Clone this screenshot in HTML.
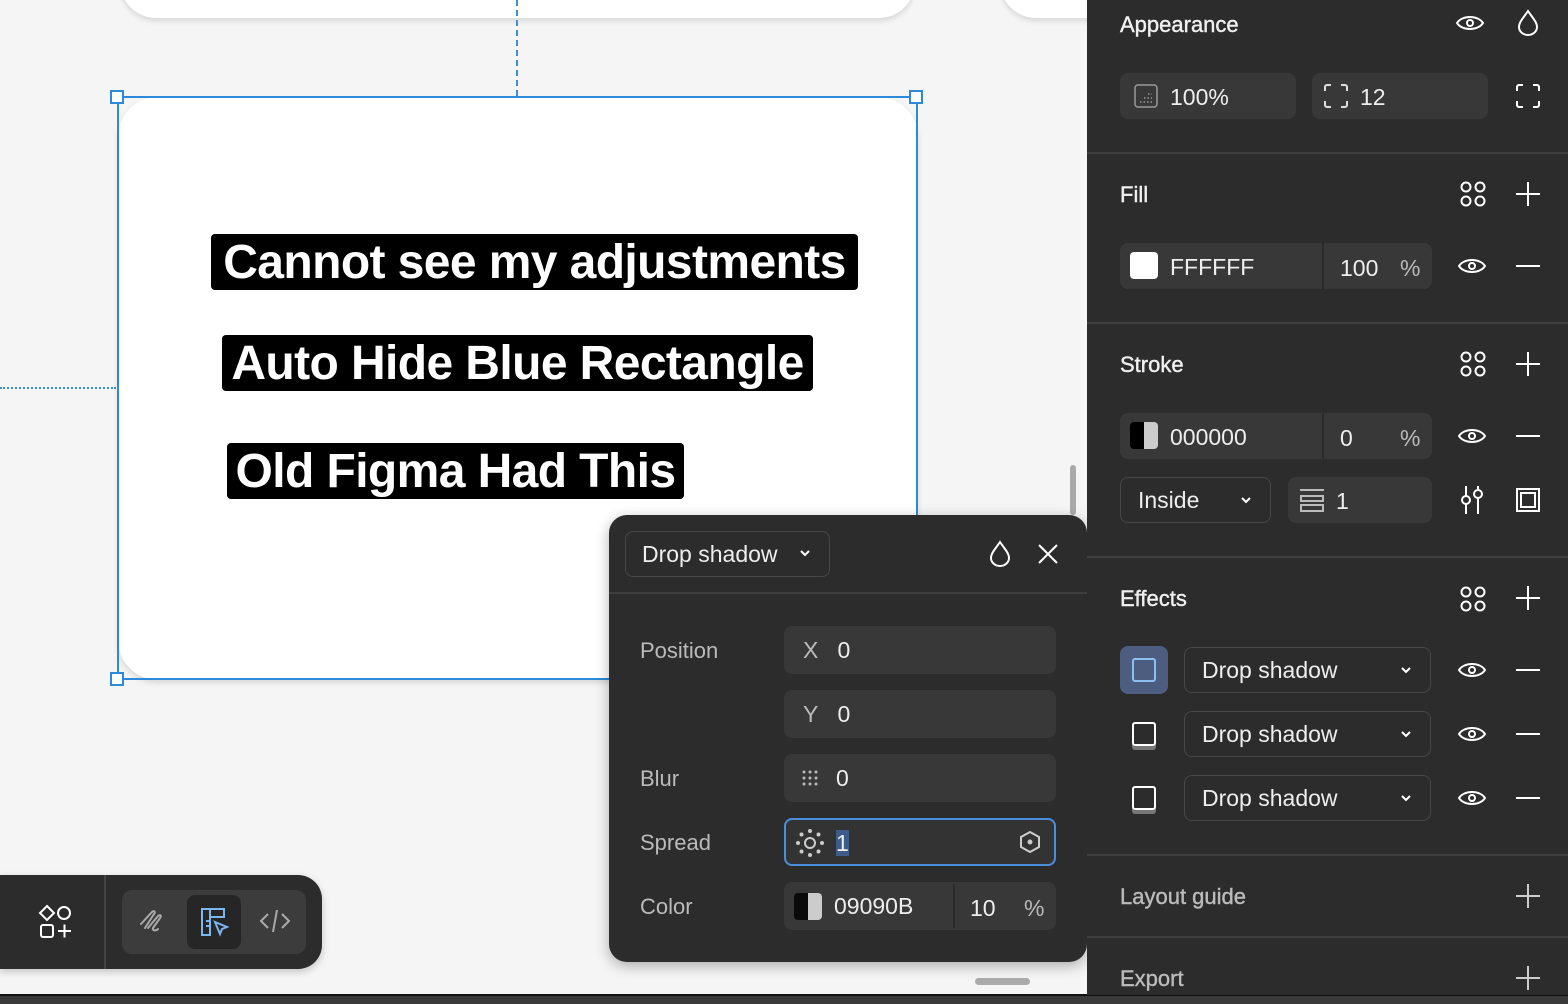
<!DOCTYPE html>
<html><head><meta charset="utf-8"><style>
*{box-sizing:border-box;margin:0;padding:0}
body{width:1568px;height:1004px;overflow:hidden;background:#f5f5f5;font-family:"Liberation Sans",sans-serif;position:relative;color:#fff}
.a{position:absolute}
.card{background:#fff;box-shadow:0 3px 6px rgba(0,0,0,.12)}
.lbl{position:absolute;background:#000;color:#fff;font-weight:bold;font-size:48px;line-height:58px;height:56px;border-radius:4px;white-space:nowrap;overflow:hidden;text-align:center;letter-spacing:-0.6px}
.h{position:absolute;left:1120px;font-size:22px;color:#f0f0f0;-webkit-text-stroke:0.4px #f0f0f0}
.f{position:absolute;background:#383838;border-radius:8px;height:46px;font-size:23px;line-height:48px;color:#eee}
.dd{position:absolute;border:1.5px solid #484848;border-radius:8px;height:46px;font-size:23px;line-height:45px;color:#eee}
.div{position:absolute;left:1087px;width:481px;height:2px;background:#3e3e3e}
svg{position:absolute;overflow:visible}
.pl{position:absolute;font-size:22px;color:#bbb}
.n{position:absolute;font-size:23px;color:#eee}
</style></head><body>
<!-- canvas -->
<div class="a card" style="left:120px;top:-60px;width:795px;height:78px;border-radius:0 0 36px 36px"></div>
<div class="a card" style="left:1000px;top:-60px;width:120px;height:78px;border-radius:0 0 0 36px"></div>
<div class="a" style="left:516px;top:0;height:96px;border-left:2px dashed #3b8fd9"></div>
<div class="a" style="left:0;top:387px;width:116px;border-top:2px dotted #3b8fd9"></div>
<div class="a card" style="left:118px;top:97px;width:800px;height:583px;border-radius:40px 40px 0 40px"></div>
<div class="a" style="left:117px;top:96px;width:801px;height:584px;border:2px solid #2d8ad8"></div>
<div class="a" style="left:110px;top:90px;width:14px;height:14px;border:2px solid #2d8ad8;background:#fff"></div>
<div class="a" style="left:909px;top:90px;width:14px;height:14px;border:2px solid #2d8ad8;background:#fff"></div>
<div class="a" style="left:110px;top:672px;width:14px;height:14px;border:2px solid #2d8ad8;background:#fff"></div>
<div class="lbl" style="left:211px;top:234px;width:647px">Cannot see my adjustments</div>
<div class="lbl" style="left:222px;top:335px;width:591px">Auto Hide Blue Rectangle</div>
<div class="lbl" style="left:227px;top:443px;width:457px">Old Figma Had This</div>
<div class="a" style="left:1070px;top:465px;width:6px;height:50px;background:#aaa;border-radius:3px"></div>
<div class="a" style="left:975px;top:978px;width:55px;height:7px;background:#aaa;border-radius:4px"></div>
<div class="a" style="left:0;top:994px;width:1568px;height:10px;background:#3a3a3a;border-top:2px solid #111"></div>

<!-- toolbar -->
<div class="a" style="left:0;top:875px;width:322px;height:94px;background:#2c2c2c;border-radius:0 24px 24px 0;box-shadow:0 3px 8px rgba(0,0,0,.2)"></div>
<div class="a" style="left:104px;top:875px;width:2px;height:94px;background:#444"></div>
<svg style="left:38px;top:905px" width="36" height="34" fill="none" stroke="#fff" stroke-width="2"><path d="M9 1l7 7-7 7-7-7z"/><circle cx="26" cy="8" r="6"/><rect x="3" y="20" width="12" height="12" rx="2"/><path d="M20 26h13M26.5 19.5v13"/></svg>
<div class="a" style="left:122px;top:890px;width:184px;height:64px;background:#3c3c3c;border-radius:10px"></div>
<div class="a" style="left:187px;top:895px;width:54px;height:54px;background:#262626;border-radius:8px"></div>
<svg style="left:140px;top:908px" width="28" height="26" fill="none" stroke="#aaa" stroke-width="2" stroke-linecap="round"><path d="M1 16L12 4c2-2 4 0 2 2L5 20M8 20L18 8c2-2 4 0 2 2L13 20c-1 3 3 3 5 1"/></svg>
<svg style="left:201px;top:908px" width="28" height="28" fill="none" stroke="#7cb7ee" stroke-width="2"><path d="M1 1h22v8H9v18H1z"/><path d="M9 9V1M5 13h4M5 18h4"/><path d="M14 14l12 5-5 2-2 5z"/></svg>
<svg style="left:260px;top:908px" width="30" height="26" fill="none" stroke="#aaa" stroke-width="2"><path d="M8 6L1 13l7 7M22 6l7 7-7 7M17 2l-4 22"/></svg>

<!-- popup -->
<div class="a" style="left:609px;top:515px;width:478px;height:447px;background:#2c2c2c;border-radius:18px;box-shadow:0 4px 14px rgba(0,0,0,.3)"></div>
<div class="dd" style="left:625px;top:531px;width:205px;padding-left:16px">Drop shadow</div>
<svg style="left:800px;top:550px" width="10" height="6" fill="none" stroke="#fff" stroke-width="2"><path d="M1 1l4 4 4-4"/></svg>
<svg style="left:990px;top:541px" width="20" height="26" fill="none" stroke="#fff" stroke-width="2"><path d="M10 1C6 7 1 12 1 17a9 8 0 0018 0C19 12 14 7 10 1z"/></svg>
<svg style="left:1038px;top:544px" width="20" height="20" stroke="#fff" stroke-width="2"><path d="M1 1l18 18M19 1L1 19"/></svg>
<div class="a" style="left:609px;top:592px;width:478px;height:2px;background:#3e3e3e"></div>
<div class="pl" style="left:640px;top:638px">Position</div>
<div class="pl" style="left:640px;top:766px">Blur</div>
<div class="pl" style="left:640px;top:830px">Spread</div>
<div class="pl" style="left:640px;top:894px">Color</div>
<div class="f" style="left:784px;top:626px;width:272px;height:48px;padding-left:19px"><span style="color:#bbb">X</span>&nbsp;&nbsp;&nbsp;0</div>
<div class="f" style="left:784px;top:690px;width:272px;height:48px;padding-left:19px"><span style="color:#bbb">Y</span>&nbsp;&nbsp;&nbsp;0</div>
<div class="f" style="left:784px;top:754px;width:272px;height:48px;padding-left:52px">0</div>
<svg style="left:802px;top:770px" width="16" height="16" fill="#bbb"><circle cx="2" cy="2" r="1.5"/><circle cx="8" cy="2" r="1.5"/><circle cx="14" cy="2" r="1.5"/><circle cx="2" cy="8" r="1.5"/><circle cx="8" cy="8" r="1.5"/><circle cx="14" cy="8" r="1.5"/><circle cx="2" cy="14" r="1.5"/><circle cx="8" cy="14" r="1.5"/><circle cx="14" cy="14" r="1.5"/></svg>
<div class="f" style="left:784px;top:818px;width:272px;height:48px;border:2px solid #4a8fdc;background:#333;padding-left:50px;line-height:46px"><span style="background:#3e5c8a">1</span></div>
<svg style="left:796px;top:829px" width="28" height="28" fill="#ccc" stroke="#ccc"><circle cx="14" cy="14" r="5" fill="none" stroke-width="2"/><circle cx="14" cy="2" r="1.5"/><circle cx="14" cy="26" r="1.5"/><circle cx="2" cy="14" r="1.5"/><circle cx="26" cy="14" r="1.5"/><circle cx="5.5" cy="5.5" r="1.5"/><circle cx="22.5" cy="22.5" r="1.5"/><circle cx="5.5" cy="22.5" r="1.5"/><circle cx="22.5" cy="5.5" r="1.5"/></svg>
<svg style="left:1019px;top:831px" width="22" height="22" fill="none" stroke="#ccc" stroke-width="2"><path d="M11 1l9 5v10l-9 5-9-5V6z"/><circle cx="11" cy="11" r="1.5" fill="#ccc"/></svg>
<div class="f" style="left:784px;top:882px;width:272px;height:48px;padding-left:50px">09090B</div>
<div class="a" style="left:953px;top:884px;width:2px;height:44px;background:#2a2a2a"></div>
<div class="n" style="left:970px;top:895px">10</div>
<div class="n" style="left:1024px;top:895px;color:#bbb">%</div>
<div class="a" style="left:794px;top:893px;width:28px;height:27px;border-radius:4px;background:linear-gradient(90deg,#0a0a0a 50%,#ccc 50%)"></div>

<!-- right panel -->
<div class="a" style="left:1087px;top:0;width:481px;height:995px;background:#2c2c2c"></div>
<div class="h" style="top:12px">Appearance</div>
<svg style="left:1456px;top:13px" width="28" height="20" fill="none" stroke="#fff" stroke-width="2"><path d="M1 10C6 2 22 2 27 10 22 18 6 18 1 10z"/><circle cx="14" cy="10" r="3"/></svg>
<svg style="left:1518px;top:10px" width="20" height="26" fill="none" stroke="#fff" stroke-width="2"><path d="M10 1C6 7 1 12 1 17a9 8 0 0018 0C19 12 14 7 10 1z"/></svg>
<div class="f" style="left:1120px;top:73px;width:176px;padding-left:50px">100%</div>
<svg style="left:1134px;top:84px" width="24" height="24" fill="none" stroke="#999" stroke-width="1.5"><rect x="1" y="1" width="22" height="22" rx="3"/><path d="M6 18h12M10 14h8M14 10h4" stroke-dasharray="1.5 2"/></svg>
<div class="f" style="left:1312px;top:73px;width:176px;padding-left:48px">12</div>
<svg style="left:1324px;top:84px" width="24" height="24" fill="none" stroke="#ddd" stroke-width="2"><path d="M1 7V3a2 2 0 012-2h4M17 1h4a2 2 0 012 2v4M23 17v4a2 2 0 01-2 2h-4M7 23H3a2 2 0 01-2-2v-4"/></svg>
<svg style="left:1516px;top:84px" width="24" height="24" fill="none" stroke="#fff" stroke-width="2"><path d="M1 7V3a2 2 0 012-2h4M17 1h4a2 2 0 012 2v4M23 17v4a2 2 0 01-2 2h-4M7 23H3a2 2 0 01-2-2v-4"/></svg>
<div class="div" style="top:152px"></div>

<div class="h" style="top:182px">Fill</div>
<svg style="left:1460px;top:181px" width="26" height="26" fill="none" stroke="#fff" stroke-width="2"><circle cx="6" cy="6" r="4.5"/><circle cx="20" cy="6" r="4.5"/><circle cx="6" cy="20" r="4.5"/><circle cx="20" cy="20" r="4.5"/></svg>
<svg style="left:1516px;top:182px" width="24" height="24" stroke="#fff" stroke-width="2"><path d="M12 0v24M0 12h24"/></svg>
<div class="f" style="left:1120px;top:243px;width:312px;padding-left:50px">FFFFFF</div>
<div class="a" style="left:1130px;top:252px;width:28px;height:27px;background:#fff;border-radius:4px"></div>
<div class="a" style="left:1322px;top:243px;width:2px;height:46px;background:#2a2a2a"></div>
<div class="n" style="left:1340px;top:255px">100</div>
<div class="n" style="left:1400px;top:255px;color:#bbb">%</div>
<svg style="left:1458px;top:256px" width="28" height="20" fill="none" stroke="#fff" stroke-width="2"><path d="M1 10C6 2 22 2 27 10 22 18 6 18 1 10z"/><circle cx="14" cy="10" r="3"/></svg>
<div class="a" style="left:1516px;top:265px;width:24px;height:2px;background:#fff"></div>
<div class="div" style="top:322px"></div>

<div class="h" style="top:352px">Stroke</div>
<svg style="left:1460px;top:351px" width="26" height="26" fill="none" stroke="#fff" stroke-width="2"><circle cx="6" cy="6" r="4.5"/><circle cx="20" cy="6" r="4.5"/><circle cx="6" cy="20" r="4.5"/><circle cx="20" cy="20" r="4.5"/></svg>
<svg style="left:1516px;top:352px" width="24" height="24" stroke="#fff" stroke-width="2"><path d="M12 0v24M0 12h24"/></svg>
<div class="f" style="left:1120px;top:413px;width:312px;padding-left:50px">000000</div>
<div class="a" style="left:1130px;top:422px;width:28px;height:27px;background:linear-gradient(90deg,#000 50%,#ccc 50%);border-radius:4px"></div>
<div class="a" style="left:1322px;top:413px;width:2px;height:46px;background:#2a2a2a"></div>
<div class="n" style="left:1340px;top:425px">0</div>
<div class="n" style="left:1400px;top:425px;color:#bbb">%</div>
<svg style="left:1458px;top:426px" width="28" height="20" fill="none" stroke="#fff" stroke-width="2"><path d="M1 10C6 2 22 2 27 10 22 18 6 18 1 10z"/><circle cx="14" cy="10" r="3"/></svg>
<div class="a" style="left:1516px;top:435px;width:24px;height:2px;background:#fff"></div>
<div class="dd" style="left:1120px;top:477px;width:151px;padding-left:17px">Inside</div>
<svg style="left:1241px;top:497px" width="10" height="6" fill="none" stroke="#fff" stroke-width="2"><path d="M1 1l4 4 4-4"/></svg>
<div class="f" style="left:1288px;top:477px;width:144px;padding-left:48px">1</div>
<svg style="left:1300px;top:488px" width="24" height="24" fill="none" stroke="#bbb" stroke-width="2"><path d="M0 2h24"/><rect x="1" y="8" width="22" height="5"/><rect x="1" y="17" width="22" height="6"/></svg>
<svg style="left:1460px;top:486px" width="24" height="28" fill="none" stroke="#fff" stroke-width="2"><path d="M6 0v10M6 18v10M18 0v4M18 12v16"/><circle cx="6" cy="14" r="4"/><circle cx="18" cy="8" r="4"/></svg>
<svg style="left:1516px;top:488px" width="24" height="24" fill="none" stroke="#fff" stroke-width="2"><rect x="1" y="1" width="22" height="22"/><rect x="5" y="5" width="14" height="14"/></svg>
<div class="div" style="top:556px"></div>

<div class="h" style="top:586px">Effects</div>
<svg style="left:1460px;top:586px" width="26" height="26" fill="none" stroke="#fff" stroke-width="2"><circle cx="6" cy="6" r="4.5"/><circle cx="20" cy="6" r="4.5"/><circle cx="6" cy="20" r="4.5"/><circle cx="20" cy="20" r="4.5"/></svg>
<svg style="left:1516px;top:586px" width="24" height="24" stroke="#fff" stroke-width="2"><path d="M12 0v24M0 12h24"/></svg>

<div class="a" style="left:1120px;top:646px;width:48px;height:48px;background:#4d5d80;border-radius:8px"></div>
<div class="a" style="left:1132px;top:658px;width:24px;height:24px;border:2px solid #8cc0f2;border-radius:3px"></div>
<div class="a" style="left:1132px;top:722px;width:24px;height:24px;border:2px solid #fff;border-radius:3px;box-shadow:0 4px 0 #777"></div>
<div class="a" style="left:1132px;top:786px;width:24px;height:24px;border:2px solid #fff;border-radius:3px;box-shadow:0 4px 0 #777"></div>
<div class="dd" style="left:1184px;top:647px;width:247px;padding-left:17px">Drop shadow</div>
<div class="dd" style="left:1184px;top:711px;width:247px;padding-left:17px">Drop shadow</div>
<div class="dd" style="left:1184px;top:775px;width:247px;padding-left:17px">Drop shadow</div>
<svg style="left:1401px;top:667px" width="10" height="6" fill="none" stroke="#fff" stroke-width="2"><path d="M1 1l4 4 4-4"/></svg>
<svg style="left:1401px;top:731px" width="10" height="6" fill="none" stroke="#fff" stroke-width="2"><path d="M1 1l4 4 4-4"/></svg>
<svg style="left:1401px;top:795px" width="10" height="6" fill="none" stroke="#fff" stroke-width="2"><path d="M1 1l4 4 4-4"/></svg>
<svg style="left:1458px;top:660px" width="28" height="20" fill="none" stroke="#fff" stroke-width="2"><path d="M1 10C6 2 22 2 27 10 22 18 6 18 1 10z"/><circle cx="14" cy="10" r="3"/></svg>
<svg style="left:1458px;top:724px" width="28" height="20" fill="none" stroke="#fff" stroke-width="2"><path d="M1 10C6 2 22 2 27 10 22 18 6 18 1 10z"/><circle cx="14" cy="10" r="3"/></svg>
<svg style="left:1458px;top:788px" width="28" height="20" fill="none" stroke="#fff" stroke-width="2"><path d="M1 10C6 2 22 2 27 10 22 18 6 18 1 10z"/><circle cx="14" cy="10" r="3"/></svg>
<div class="a" style="left:1516px;top:669px;width:24px;height:2px;background:#fff"></div>
<div class="a" style="left:1516px;top:733px;width:24px;height:2px;background:#fff"></div>
<div class="a" style="left:1516px;top:797px;width:24px;height:2px;background:#fff"></div>
<div class="div" style="top:854px"></div>
<div class="h" style="top:884px;color:#bbb;-webkit-text-stroke:0.4px #bbb">Layout guide</div>
<svg style="left:1516px;top:884px" width="24" height="24" stroke="#ccc" stroke-width="2"><path d="M12 0v24M0 12h24"/></svg>
<div class="div" style="top:936px"></div>
<div class="h" style="top:966px;color:#bbb;-webkit-text-stroke:0.4px #bbb">Export</div>
<svg style="left:1516px;top:966px" width="24" height="24" stroke="#ccc" stroke-width="2"><path d="M12 0v24M0 12h24"/></svg>
</body></html>
